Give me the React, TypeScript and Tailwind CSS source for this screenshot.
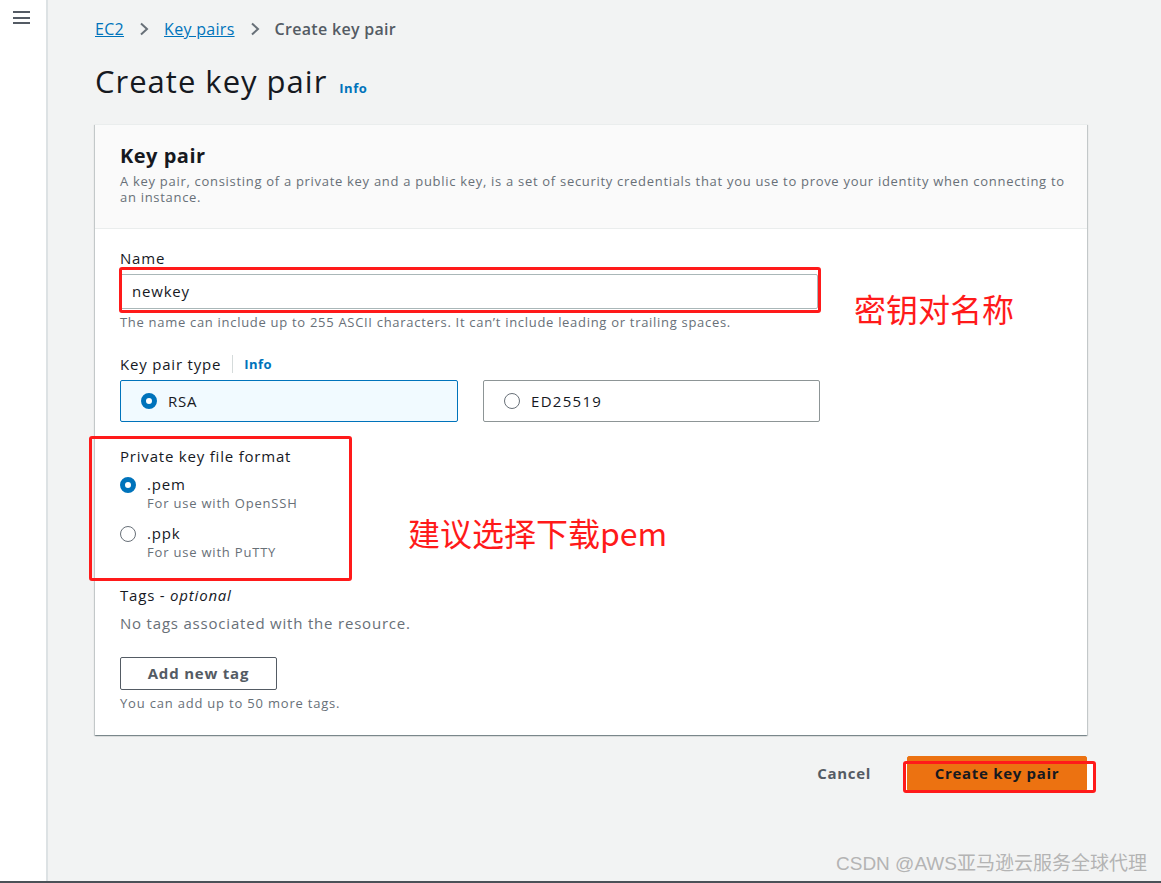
import React from "react";

const Chevron = () => (
  <svg width="12" height="14" viewBox="0 0 12 14" className="mx-[14px]">
    <polyline points="3,1.5 9,7 3,12.5" fill="none" stroke="#687078" strokeWidth="2" />
  </svg>
);

const Radio = ({ checked }: { checked: boolean }) =>
  checked ? (
    <span className="inline-block w-[16px] h-[16px] rounded-full border-[5px] border-[#0073bb] bg-white shrink-0" />
  ) : (
    <span className="inline-block w-[16px] h-[16px] rounded-full border-[1.5px] border-[#687078] bg-white shrink-0" />
  );

export default function App() {
  return (
    <div className="relative flex h-[883px] w-full overflow-hidden border-b-2 border-[#4b5157] bg-[#f2f3f3] font-['Open_Sans',sans-serif] text-[#16191f]">
      <aside className="w-[48px] shrink-0 bg-white border-r-2 border-[#dde2e4] pt-[11px] pl-[13px]">
        <div className="flex flex-col gap-[3.5px] w-[17px]">
          <span className="block h-[2px] bg-[#545b64]" />
          <span className="block h-[2px] bg-[#545b64]" />
          <span className="block h-[2px] bg-[#545b64]" />
        </div>
      </aside>

      <main className="flex-1 pl-[47px] pt-[18px]">
        <nav className="flex items-center h-[22px] text-[16px] leading-[22px] tracking-[0.3px]">
          <span className="text-[#0073bb] underline">EC2</span>
          <Chevron />
          <span className="text-[#0073bb] underline">Key pairs</span>
          <Chevron />
          <span className="text-[#545b64] font-semibold">Create key pair</span>
        </nav>

        <div className="mt-[23px] flex items-baseline h-[36px]">
          <h1 className="text-[31px] leading-[36px] font-normal tracking-[1px] text-[#16191f]">Create key pair</h1>
          <span className="ml-[12px] text-[13px] font-bold tracking-[0.5px] text-[#0073bb]">Info</span>
        </div>

        <section className="mt-[25px] w-[992px] bg-white border-t border-[#eaeded] shadow-[0_1px_1px_0_rgba(0,28,36,0.3),1px_1px_1px_0_rgba(0,28,36,0.15),-1px_1px_1px_0_rgba(0,28,36,0.15)]">
          <header className="bg-[#fafafa] border-b border-[#eaeded] pl-[25px] pr-[14px] pt-[19px] pb-[23px]">
            <h2 className="text-[20px] leading-[24px] font-bold tracking-[0.5px] text-[#16191f]">Key pair</h2>
            <p className="mt-[5px] text-[13px] leading-[16px] tracking-[0.7px] text-[#687078]">
              A key pair, consisting of a private key and a public key, is a set of security credentials that you use to prove your identity when connecting to an instance.
            </p>
          </header>

          <div className="pl-[25px] pt-[19px] pb-[24px] text-[15px] tracking-[0.8px]">
            {/* Name */}
            <div className="relative w-[700px]">
              <label className="block leading-[20px] text-[#16191f]">Name</label>
              <div className="mt-[6px] h-[35px] w-[698px] border border-[#aab7b8] rounded-[2px] bg-white flex items-center pl-[11px] text-[#16191f]">
                newkey
              </div>
              <p className="mt-[5px] text-[13px] leading-[16px] tracking-[0.7px] text-[#687078] whitespace-nowrap">
                The name can include up to 255 ASCII characters. It can’t include leading or trailing spaces.
              </p>
              <div className="absolute left-[-1px] top-[19px] w-[702px] h-[46px] border-[3px] border-[#ff1a1a] rounded-[3px] pointer-events-none" />
              <div className="absolute left-[734px] top-[40px] whitespace-nowrap text-[32px] leading-[40px] tracking-normal text-[#ff1a1a] font-['Noto_Sans_CJK_SC',sans-serif]">
                密钥对名称
              </div>
            </div>

            {/* Key pair type */}
            <div className="mt-[24px]">
              <div className="flex items-center h-[20px] leading-[20px]">
                <span className="text-[#16191f]">Key pair type</span>
                <span className="mx-[11px] h-[18px] w-px bg-[#d5dbdb]" />
                <span className="text-[13px] font-bold tracking-[0.5px] text-[#0073bb]">Info</span>
              </div>
              <div className="mt-[6px] flex gap-[25px]">
                <div className="w-[338px] h-[42px] border border-[#0073bb] bg-[#f1faff] rounded-[2px] flex items-center pl-[20px] gap-[11px]">
                  <Radio checked />
                  <span>RSA</span>
                </div>
                <div className="w-[337px] h-[42px] border border-[#8d9596] bg-white rounded-[2px] flex items-center pl-[20px] gap-[11px]">
                  <Radio checked={false} />
                  <span className="tracking-[1.3px]">ED25519</span>
                </div>
              </div>
            </div>

            {/* Private key file format */}
            <div className="relative mt-[24px] w-[232px]">
              <div className="leading-[20px] text-[#16191f] whitespace-nowrap">Private key file format</div>
              <div className="mt-[8px] flex gap-[11px]">
                <div className="pt-[2px]"><Radio checked /></div>
                <div>
                  <div className="leading-[20px]">.pem</div>
                  <div className="text-[13px] leading-[18px] tracking-[0.8px] text-[#687078] whitespace-nowrap">For use with OpenSSH</div>
                </div>
              </div>
              <div className="mt-[11px] flex gap-[11px]">
                <div className="pt-[2px]"><Radio checked={false} /></div>
                <div>
                  <div className="leading-[20px]">.ppk</div>
                  <div className="text-[13px] leading-[18px] tracking-[0.8px] text-[#687078] whitespace-nowrap">For use with PuTTY</div>
                </div>
              </div>
              <div className="absolute left-[-31px] top-[-10px] w-[263px] h-[145px] border-[3px] border-[#ff1a1a] rounded-[3px] pointer-events-none" />
              <div className="absolute left-[288px] top-[66px] whitespace-nowrap text-[32px] leading-[40px] tracking-normal text-[#ff1a1a] font-['Noto_Sans_CJK_SC',sans-serif]">
                建议选择下载pem
              </div>
            </div>

            {/* Tags */}
            <div className="mt-[24px]">
              <div className="leading-[20px] text-[#16191f]">
                Tags - <span className="italic">optional</span>
              </div>
              <div className="mt-[8px] leading-[20px] text-[#687078]">No tags associated with the resource.</div>
              <button className="mt-[24px] h-[33px] w-[157px] border border-[#545b64] rounded-[2px] bg-white font-bold text-[#545b64]">
                Add new tag
              </button>
              <div className="mt-[5px] text-[13px] leading-[16px] tracking-[0.8px] text-[#687078]">You can add up to 50 more tags.</div>
            </div>
          </div>
        </section>

        <div className="mt-[21px] w-[992px] flex justify-end items-center text-[15px] tracking-[0.7px]">
          <span className="font-bold text-[#545b64]">Cancel</span>
          <div className="relative ml-[36px] w-[180px] h-[35px]">
            <div className="absolute left-[-4px] top-[5px] w-[193px] h-[32px] bg-white rounded-[3px]" />
            <button className="relative w-[180px] h-[35px] bg-[#ec7211] border border-[#ec7211] rounded-[2px] font-bold text-[#16191f]">
              Create key pair
            </button>
            <div className="absolute left-[-4px] top-[5px] w-[193px] h-[32px] border-[3px] border-[#ff1a1a] rounded-[3px] pointer-events-none" />
          </div>
        </div>
      </main>

      <div className="absolute left-[836px] top-[850px] whitespace-nowrap text-[19px] leading-[28px] text-[#b4b4b4] font-['Liberation_Sans','Noto_Sans_CJK_SC',sans-serif]">
        CSDN @AWS亚马逊云服务全球代理
      </div>
    </div>
  );
}
